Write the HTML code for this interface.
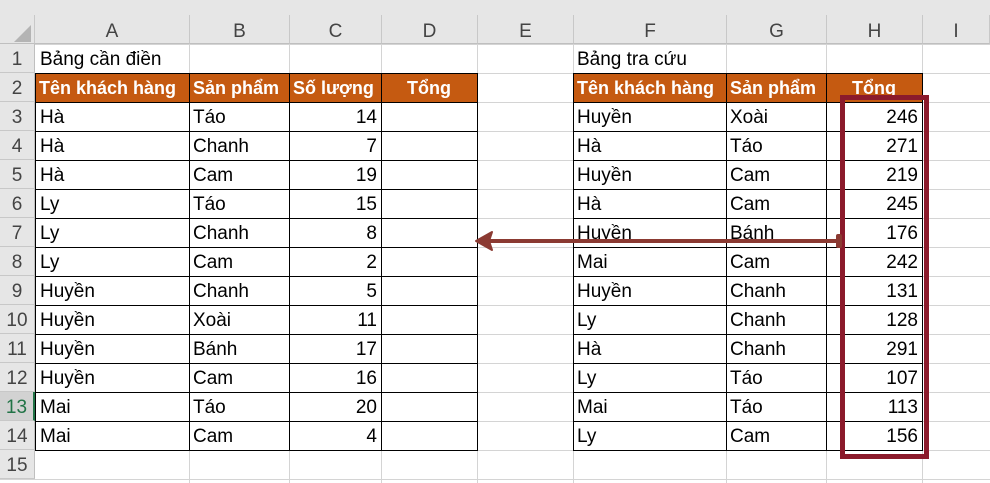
<!DOCTYPE html>
<html><head><meta charset="utf-8"><style>
body{margin:0;width:990px;height:483px;overflow:hidden;background:#fff;font-family:"Liberation Sans",Arial,sans-serif;position:relative}
.abs{position:absolute}
#grid{position:absolute;left:0;top:44px;width:990px;height:439px;background:repeating-linear-gradient(to bottom,#d4d4d4 0 1px,transparent 1px 29px)}
.gv{position:absolute;top:15px;width:1px;height:468px;background:#d4d4d4}
.r{position:absolute;left:0;width:990px;height:29px;font-size:19px;line-height:31px;white-space:nowrap}
.r span{position:absolute;top:0;height:29px;box-sizing:border-box}
.rh{left:0;width:35px;text-align:center;color:#444;background:#e6e6e6;border-bottom:1px solid #c8c8c8;border-right:1px solid #bfbfbf}
.a{left:35px;width:154px;padding-left:5px}
.b{left:189px;width:100px;padding-left:4px}
.c{left:289px;width:92px;text-align:right;padding-right:4px}
.d{left:381px;width:96px}
.f{left:573px;width:153px;padding-left:4px}
.g{left:726px;width:100px;padding-left:4px}
.h{left:826px;width:96px;text-align:right;padding-right:4px}
.hd{background:#c55a11;color:#fff;font-weight:bold;font-size:18px;top:1px!important;height:28px!important;line-height:29px}
.ctr{text-align:center}
.ch{position:absolute;top:15px;height:29px;line-height:33px;text-align:center;font-size:19px;color:#444;background:#e6e6e6;border-right:1px solid #c8c8c8;border-bottom:1px solid #bfbfbf;box-sizing:border-box}
.v{position:absolute;width:1px;background:#000}
.hl{position:absolute;height:1px;background:#000}
</style></head><body>
<div class="abs" style="left:0;top:0;width:990px;height:15px;background:#e6e6e6"></div>
<div id="grid"></div>
<div class="gv" style="left:189px"></div><div class="gv" style="left:289px"></div><div class="gv" style="left:381px"></div><div class="gv" style="left:477px"></div><div class="gv" style="left:573px"></div><div class="gv" style="left:726px"></div><div class="gv" style="left:826px"></div><div class="gv" style="left:922px"></div>
<div class="ch" style="left:0;width:35px"><svg width="35" height="29" style="position:absolute;left:0;top:0"><polygon points="31,10 31,27 14,27" fill="#b4b4b4"/></svg></div>
<div class="ch" style="left:35px;width:155px">A</div>
<div class="ch" style="left:190px;width:100px">B</div>
<div class="ch" style="left:290px;width:92px">C</div>
<div class="ch" style="left:382px;width:96px">D</div>
<div class="ch" style="left:478px;width:96px">E</div>
<div class="ch" style="left:574px;width:153px">F</div>
<div class="ch" style="left:727px;width:100px">G</div>
<div class="ch" style="left:827px;width:96px">H</div>
<div class="ch" style="left:923px;width:67px">I</div>

<div class="r" style="top:44px"><span class="rh">1</span><span class="a">Bảng cần điền</span><span class="f">Bảng tra cứu</span></div>
<div class="r" style="top:73px"><span class="rh">2</span><span class="a hd" style="padding-left:4px">Tên khách hàng</span><span class="b hd">Sản phẩm</span><span class="c hd" style="text-align:left;padding-left:4px">Số lượng</span><span class="d hd ctr">Tổng</span><span class="f hd">Tên khách hàng</span><span class="g hd">Sản phẩm</span><span class="h hd ctr" style="padding:0">Tổng</span></div>
<div class="r" style="top:102px"><span class="rh">3</span><span class="a">Hà</span><span class="b">Táo</span><span class="c">14</span><span class="f">Huyền</span><span class="g">Xoài</span><span class="h">246</span></div>
<div class="r" style="top:131px"><span class="rh">4</span><span class="a">Hà</span><span class="b">Chanh</span><span class="c">7</span><span class="f">Hà</span><span class="g">Táo</span><span class="h">271</span></div>
<div class="r" style="top:160px"><span class="rh">5</span><span class="a">Hà</span><span class="b">Cam</span><span class="c">19</span><span class="f">Huyền</span><span class="g">Cam</span><span class="h">219</span></div>
<div class="r" style="top:189px"><span class="rh">6</span><span class="a">Ly</span><span class="b">Táo</span><span class="c">15</span><span class="f">Hà</span><span class="g">Cam</span><span class="h">245</span></div>
<div class="r" style="top:218px"><span class="rh">7</span><span class="a">Ly</span><span class="b">Chanh</span><span class="c">8</span><span class="f">Huyền</span><span class="g">Bánh</span><span class="h">176</span></div>
<div class="r" style="top:247px"><span class="rh">8</span><span class="a">Ly</span><span class="b">Cam</span><span class="c">2</span><span class="f">Mai</span><span class="g">Cam</span><span class="h">242</span></div>
<div class="r" style="top:276px"><span class="rh">9</span><span class="a">Huyền</span><span class="b">Chanh</span><span class="c">5</span><span class="f">Huyền</span><span class="g">Chanh</span><span class="h">131</span></div>
<div class="r" style="top:305px"><span class="rh">10</span><span class="a">Huyền</span><span class="b">Xoài</span><span class="c">11</span><span class="f">Ly</span><span class="g">Chanh</span><span class="h">128</span></div>
<div class="r" style="top:334px"><span class="rh">11</span><span class="a">Huyền</span><span class="b">Bánh</span><span class="c">17</span><span class="f">Hà</span><span class="g">Chanh</span><span class="h">291</span></div>
<div class="r" style="top:363px"><span class="rh">12</span><span class="a">Huyền</span><span class="b">Cam</span><span class="c">16</span><span class="f">Ly</span><span class="g">Táo</span><span class="h">107</span></div>
<div class="r" style="top:392px"><span class="rh" style="background:#d2d2d2;color:#217346;border-right:2px solid #217346">13</span><span class="a">Mai</span><span class="b">Táo</span><span class="c">20</span><span class="f">Mai</span><span class="g">Táo</span><span class="h">113</span></div>
<div class="r" style="top:421px"><span class="rh">14</span><span class="a">Mai</span><span class="b">Cam</span><span class="c">4</span><span class="f">Ly</span><span class="g">Cam</span><span class="h">156</span></div>
<div class="r" style="top:450px"><span class="rh">15</span></div>

<div class="v" style="left:35px;top:73px;height:378px"></div>
<div class="v" style="left:189px;top:73px;height:378px"></div>
<div class="v" style="left:289px;top:73px;height:378px"></div>
<div class="v" style="left:381px;top:73px;height:378px"></div>
<div class="v" style="left:477px;top:73px;height:378px"></div>
<div class="v" style="left:573px;top:73px;height:378px"></div>
<div class="v" style="left:726px;top:73px;height:378px"></div>
<div class="v" style="left:826px;top:73px;height:378px"></div>
<div class="v" style="left:922px;top:73px;height:378px"></div>
<div class="hl" style="left:35px;width:443px;top:73px"></div><div class="hl" style="left:573px;width:350px;top:73px"></div>
<div class="hl" style="left:35px;width:443px;top:102px"></div><div class="hl" style="left:573px;width:350px;top:102px"></div>
<div class="hl" style="left:35px;width:443px;top:131px"></div><div class="hl" style="left:573px;width:350px;top:131px"></div>
<div class="hl" style="left:35px;width:443px;top:160px"></div><div class="hl" style="left:573px;width:350px;top:160px"></div>
<div class="hl" style="left:35px;width:443px;top:189px"></div><div class="hl" style="left:573px;width:350px;top:189px"></div>
<div class="hl" style="left:35px;width:443px;top:218px"></div><div class="hl" style="left:573px;width:350px;top:218px"></div>
<div class="hl" style="left:35px;width:443px;top:247px"></div><div class="hl" style="left:573px;width:350px;top:247px"></div>
<div class="hl" style="left:35px;width:443px;top:276px"></div><div class="hl" style="left:573px;width:350px;top:276px"></div>
<div class="hl" style="left:35px;width:443px;top:305px"></div><div class="hl" style="left:573px;width:350px;top:305px"></div>
<div class="hl" style="left:35px;width:443px;top:334px"></div><div class="hl" style="left:573px;width:350px;top:334px"></div>
<div class="hl" style="left:35px;width:443px;top:363px"></div><div class="hl" style="left:573px;width:350px;top:363px"></div>
<div class="hl" style="left:35px;width:443px;top:392px"></div><div class="hl" style="left:573px;width:350px;top:392px"></div>
<div class="hl" style="left:35px;width:443px;top:421px"></div><div class="hl" style="left:573px;width:350px;top:421px"></div>
<div class="hl" style="left:35px;width:443px;top:450px"></div><div class="hl" style="left:573px;width:350px;top:450px"></div>

<div class="abs" style="left:840px;top:95px;width:79px;height:354px;border:5px solid #8b1a2b"></div>
<svg style="position:absolute;left:0;top:0" width="990" height="483">
<line x1="486" y1="241" x2="838" y2="241" stroke="#8b3a32" stroke-width="4"/>
<polygon points="476,241 492,232 489,241 492,250" fill="#8b3a32" stroke="#8b3a32" stroke-width="2" stroke-linejoin="round"/>
<rect x="836" y="234" width="6" height="14" rx="2" fill="#8b3a32"/>
</svg>
</body></html>
